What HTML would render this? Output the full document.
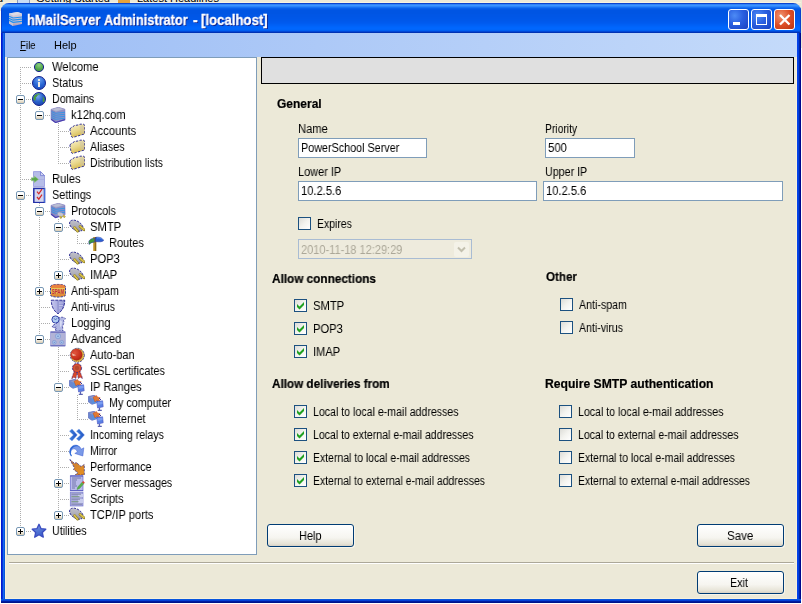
<!DOCTYPE html>
<html lang="en">
<head>
<meta charset="utf-8">
<title>hMailServer Administrator - [localhost]</title>
<style>
html,body{margin:0;padding:0}
body{width:802px;height:604px;overflow:hidden;background:#fff;position:relative;font:11px "Liberation Sans",sans-serif;color:#000}
i{font-style:normal;display:block;position:absolute}
.bgtop{position:absolute;left:0;top:0;width:802px;height:11px;background:linear-gradient(to bottom,#ece9d8 0,#ece9d8 2px,#f8f3de 2px,#f8f3de 3px,#ece9d8 3px);overflow:hidden}
.bgr{position:absolute;left:801px;top:0;width:1px;height:48px;background:#ece9d8}
.bgtop span{position:absolute;top:-8px;font:11px "Liberation Sans",sans-serif;white-space:pre;line-height:13px}
.bgtop .tb1{left:17px;top:0;width:11px;height:3px;background:#c9dcf5;border:1px solid #8899bb;border-top:0}
.bgtop .rss{left:118px;top:0;width:12px;height:3px;background:#e8a33a}
.win{position:absolute;left:1px;top:3px;width:800px;height:600px;background:#ece9d8;border-radius:8px 8px 0 0;overflow:hidden}
.win>*{position:absolute}
.win>*{margin-left:-1px;margin-top:-3px}
.title{left:1px;top:3px;width:800px;height:30px;background:linear-gradient(to bottom,#0a44cf 0px,#0a44cf 1px,#2f83f9 1px,#2f83f9 2px,#3b93ff 2px,#3b93ff 3px,#2a84fb 3px,#2a84fb 4px,#1670f2 4px,#1670f2 5px,#0860ea 5px,#0860ea 6px,#0358e6 6px,#0358e6 7px,#0055e3 7px,#0055e3 8px,#0055e3 8px,#0055e3 9px,#0055e3 9px,#0055e3 10px,#0055e3 10px,#0055e3 11px,#0056e5 11px,#0056e5 12px,#0056e6 12px,#0056e6 13px,#0056e6 13px,#0056e6 14px,#0057e7 14px,#0057e7 15px,#0057e8 15px,#0057e8 16px,#0058e9 16px,#0058e9 17px,#0058ea 17px,#0058ea 18px,#0059ec 18px,#0059ec 19px,#005aee 19px,#005aee 20px,#005cf0 20px,#005cf0 21px,#005ff4 21px,#005ff4 22px,#0061f7 22px,#0061f7 23px,#0064fa 23px,#0064fa 24px,#0066fd 24px,#0066fd 25px,#0067fe 25px,#0067fe 26px,#0066fb 26px,#0066fb 27px,#005ef0 27px,#005ef0 28px,#0047d6 28px,#0047d6 29px,#0032b4 29px,#0032b4 30px)}
.inner{left:1px;top:33px;width:800px;height:570px;background:#ece9d8}
.bl{left:1px;top:33px;width:4px;height:570px;background:linear-gradient(to right,#0019cf 0,#0019cf 1px,#0831d9 1px,#0831d9 2px,#166aee 2px,#166aee 3px,#0855dd 3px)}
.br{left:797px;top:33px;width:4px;height:570px;background:linear-gradient(to right,#0540ea 0,#0540ea 1px,#0040dc 1px,#0040dc 2px,#0024ac 2px,#0024ac 3px,#00088c 3px)}
.bb{left:1px;top:599px;width:800px;height:4px;background:linear-gradient(to top,#00138c 0,#00138c 1px,#001ea0 1px,#001ea0 2px,#0441d8 2px,#0441d8 3px,#0855dd 3px)}
.hl{left:5px;top:57px;width:1px;height:542px;background:#f6f1dc}
.hr{left:796px;top:57px;width:1px;height:542px;background:#f6f1dc}
.hb{left:5px;top:598px;width:792px;height:1px;background:#f6f1dc}
.menu{left:5px;top:33px;width:792px;height:24px;background:linear-gradient(to right,#9ebef5,#c4dafa)}
.wb{top:9px;width:21px;height:21px;box-sizing:border-box;border:1px solid #fff;border-radius:3px;background:radial-gradient(circle at 30% 30%,#4d8bf5 0%,#2a5fe0 45%,#1941c0 100%)}
.wb.wc{background:radial-gradient(circle at 30% 30%,#f0936f 0%,#dd4e27 50%,#b8330f 100%)}
.tree{left:7px;top:57px;width:250px;height:498px;box-sizing:border-box;border:1px solid #7f9db9;background:#fff}
.hd{height:1px;background:repeating-linear-gradient(to right,#adadad 0,#adadad 1px,transparent 1px,transparent 2px)}
.vd{width:1px;background:repeating-linear-gradient(to bottom,#adadad 0,#adadad 1px,transparent 1px,transparent 2px)}
.ex{width:9px;height:9px;box-sizing:border-box;border:1px solid #7898b5;border-radius:2px;background:linear-gradient(to bottom,#fff 0%,#fff 35%,#ece5d6 70%,#d6cab2 100%)}
.ex b{position:absolute;left:1px;top:3px;width:5px;height:1px;background:#000}
.ex b.pl:after{content:"";position:absolute;left:2px;top:-2px;width:1px;height:5px;background:#000}
.ic{overflow:hidden}
.hdr{left:261px;top:57px;width:533px;height:27px;box-sizing:border-box;border:1px solid #000;background:#e0e0e0}
.t,.tb,.tt,.tm{white-space:pre;font:12px "Liberation Sans",sans-serif;line-height:14px;height:14px;transform-origin:0 0;will-change:transform}
.tb{font-weight:bold;-webkit-text-stroke:.2px #000}
.tm{font-size:11px}
.tt{font:bold 14px "Liberation Sans",sans-serif;line-height:16px;height:16px;color:#fff;text-shadow:1px 1px 0 #0a1883;-webkit-text-stroke:.3px #fff}
.inp{box-sizing:border-box;border:1px solid #7f9db9;background:#fff}
.combo{box-sizing:border-box;border:1px solid #a9bcd3;background:#eeebdd}
.combo .dd{right:2px;top:2px;width:15px;height:15px;border-radius:2px;background:#f4f2e8}
.combo .dd svg{position:absolute;left:0;top:0}
.cb{width:13px;height:13px;box-sizing:border-box;border:1px solid #1c5180;background:linear-gradient(135deg,#dcdcd7 0%,#f3f3ef 50%,#fff 100%)}
.cb svg{position:absolute;left:0;top:0}
.btn{width:87px;height:23px;box-sizing:border-box;box-shadow:1px 1px 0 #f8f5ea;border:1px solid #003c74;border-radius:3px;background:linear-gradient(to bottom,#fff 0%,#f6f5f0 60%,#e6e3d6 90%,#d6d0c5 100%)}
.sep{left:9px;top:562px;width:785px;height:2px;box-sizing:border-box;border-top:1px solid #aca899;background:#fff}

.te{top:3px;width:1px;height:30px;background:#0a3fcc}

</style>
</head>
<body>
<div class="bgtop"><span style="left:-9px">ed</span><i class="tb1"></i><span style="left:36px">Getting Started</span><i class="rss"></i><span style="left:137px">Latest Headlines</span></div>
<div class="bgr"></div>
<div class="win">
<div class="title"></div>
<i class="te" style="left:1px"></i><i class="te" style="left:800px"></i>
<div class="inner"></div>
<i class="hl"></i><i class="hr"></i><i class="hb"></i>
<div class="menu"></div>
<svg class="ic" style="left:9px;top:12px" width="13" height="14" viewBox="0 0 13 14"><defs><linearGradient id="gtf" x1="0" y1="0" x2="0" y2="1"><stop offset="0" stop-color="#d6d2de"/><stop offset=".7" stop-color="#cbbccb"/><stop offset="1" stop-color="#a99ab4"/></linearGradient></defs><path d="M0 1.500L8.500 0 13 1.500V12L4 14 0 11.500z" fill="url(#gtf)"/><path d="M0 1.500L8.500 0 13 1.500 4 3.800z" fill="#dcdce6"/><path d="M0 1.500L4 3.800V14L0 11.500z" fill="#c4c4d8" opacity=".9"/><path d="M0 4.200L4 6 13 5M0 6.300L4 8.200 13 7.200M0 8.400L4 10.400 13 9.400" stroke="#1f8ff0" stroke-width="1.200" fill="none"/></svg>
<div class="wb" style="left:728px"><i style="left:4px;top:12px;width:7px;height:3px;background:#fff"></i></div>
<div class="wb" style="left:751px"><i style="left:4px;top:4px;width:11px;height:11px;border:1px solid #fff;border-top-width:3px;box-sizing:border-box"></i></div>
<div class="wb wc" style="left:774px"><svg width="19" height="19" viewBox="0 0 19 19" style="position:absolute;left:0;top:0"><path d="M5 5l9.500 9.500M14.500 5l-9.500 9.500" stroke="#fff" stroke-width="2.300"/></svg></div>
<div class="tree"></div>
<i class="vd" style="left:20px;top:67px;height:465px;background-position:0 0px"></i>
<i class="vd" style="left:39px;top:107px;height:9px;background-position:0 0px"></i>
<i class="vd" style="left:39px;top:203px;height:137px;background-position:0 0px"></i>
<i class="vd" style="left:58px;top:123px;height:41px;background-position:0 0px"></i>
<i class="vd" style="left:58px;top:219px;height:57px;background-position:0 0px"></i>
<i class="vd" style="left:58px;top:347px;height:169px;background-position:0 0px"></i>
<i class="vd" style="left:77px;top:235px;height:9px;background-position:0 0px"></i>
<i class="vd" style="left:77px;top:395px;height:25px;background-position:0 0px"></i>
<i class="hd" style="left:21px;top:67px;width:10px;background-position:1px 0"></i>
<svg class="ic" style="left:31px;top:59px" width="16" height="16" viewBox="0 0 16 16"><defs><radialGradient id="gw" cx=".5" cy=".3" r=".7"><stop offset="0" stop-color="#8ccf82"/><stop offset=".6" stop-color="#56a94f"/><stop offset="1" stop-color="#3d8f3a"/></radialGradient></defs><circle cx="8" cy="8" r="4.6" fill="url(#gw)" stroke="#1b2590" stroke-width="1"/></svg>
<i class="hd" style="left:21px;top:83px;width:10px;background-position:1px 0"></i>
<svg class="ic" style="left:31px;top:75px" width="16" height="16" viewBox="0 0 16 16"><defs><radialGradient id="gs" cx=".5" cy=".25" r=".8"><stop offset="0" stop-color="#6aa0f0"/><stop offset=".55" stop-color="#2a66d4"/><stop offset="1" stop-color="#1846b8"/></radialGradient></defs><circle cx="8" cy="8" r="6.5" fill="url(#gs)" stroke="#141f8c" stroke-width="1"/><rect x="7" y="7" width="2" height="5" fill="#f0ebe6"/><rect x="7" y="4" width="2" height="2" fill="#f0ebe6"/></svg>
<i class="hd" style="left:25px;top:99px;width:6px;background-position:1px 0"></i>
<i class="ex" style="left:16px;top:95px"><b class="mi"></b></i>
<svg class="ic" style="left:31px;top:91px" width="16" height="16" viewBox="0 0 16 16"><defs><radialGradient id="gg" cx=".4" cy=".3" r=".8"><stop offset="0" stop-color="#79a8ee"/><stop offset=".5" stop-color="#2a62cc"/><stop offset="1" stop-color="#163fa8"/></radialGradient></defs><circle cx="8" cy="8" r="6.5" fill="url(#gg)" stroke="#141f8c" stroke-width="1"/><path d="M2.2 8c.2-2.5 1.500-4.200 3.300-5l1.500.8-1 1.700-1.300.8.300 1.500L4 10z" fill="#4a9a3e"/><path d="M11.500 5.500l1.800 1.500.5 2.500-1.300 2-1-1.500.5-2z" fill="#4a9a3e"/><path d="M6 2.800l2-.5 1 1-1.500.8z" fill="#5aa84a"/></svg>
<i class="hd" style="left:44px;top:115px;width:6px;background-position:1px 0"></i>
<i class="ex" style="left:35px;top:111px"><b class="mi"></b></i>
<svg class="ic" style="left:50px;top:107px" width="16" height="16" viewBox="0 0 16 16"><path d="M1.100 2.400L8.300 .300 14.800 2.200 15.100 12.600 5.500 15.500 1.100 12.300z" fill="#8f8fc6" stroke="#6a60c0" stroke-width=".6"/><path d="M1.100 2.400L8.300 .300 14.800 2.200 5.500 4.800z" fill="#aeb0ca"/><path d="M3 2.300L8.300 .900 12.500 2.200 6 3.800z" fill="#bcbed4"/><path d="M1.100 2.400L5.500 4.800V15.500L1.100 12.300z" fill="#8486c0"/><path d="M1.500 4.600L5.500 6.300 15 5.300M1.500 6.600L5.500 8.300 15 7.300M1.500 8.600L5.500 10.300 15 9.300M1.500 10.600L5.500 12.300 15 11.300" stroke="#2f96e6" stroke-width=".9" fill="none"/><path d="M1.100 12.300L5.500 15.500 15.100 12.600" stroke="#4a3fb0" stroke-width="1.200" fill="none"/></svg>
<i class="hd" style="left:59px;top:131px;width:10px;background-position:1px 0"></i>
<svg class="ic" style="left:69px;top:123px" width="16" height="16" viewBox="0 0 16 16"><defs><linearGradient id="gf" x1="0" y1="0" x2=".45" y2="1"><stop offset="0" stop-color="#f7f2d2"/><stop offset=".55" stop-color="#ead98f"/><stop offset="1" stop-color="#d5b94f"/></linearGradient></defs><path d="M.9 6.100L2.100 4.500 4.100 3.900 4.900 2.600 10.100 1.800 10.900 1.200 14.900 1.200 15.800 3 15.700 10.900 3.700 14.500 2.100 13.300z" fill="url(#gf)" stroke="#23238f" stroke-width=".9" stroke-dasharray="2.400 1.400"/><path d="M10.500 2.400L15 1.900l.2 8.600-3.200 1z" fill="#c9c2aa" opacity=".5"/></svg>
<i class="hd" style="left:59px;top:147px;width:10px;background-position:1px 0"></i>
<svg class="ic" style="left:69px;top:139px" width="16" height="16" viewBox="0 0 16 16"><defs><linearGradient id="gf" x1="0" y1="0" x2=".45" y2="1"><stop offset="0" stop-color="#f7f2d2"/><stop offset=".55" stop-color="#ead98f"/><stop offset="1" stop-color="#d5b94f"/></linearGradient></defs><path d="M.9 6.100L2.100 4.500 4.100 3.900 4.900 2.600 10.100 1.800 10.900 1.200 14.900 1.200 15.800 3 15.700 10.900 3.700 14.500 2.100 13.300z" fill="url(#gf)" stroke="#23238f" stroke-width=".9" stroke-dasharray="2.400 1.400"/><path d="M10.500 2.400L15 1.900l.2 8.600-3.200 1z" fill="#c9c2aa" opacity=".5"/></svg>
<i class="hd" style="left:59px;top:163px;width:10px;background-position:1px 0"></i>
<svg class="ic" style="left:69px;top:155px" width="16" height="16" viewBox="0 0 16 16"><defs><linearGradient id="gf" x1="0" y1="0" x2=".45" y2="1"><stop offset="0" stop-color="#f7f2d2"/><stop offset=".55" stop-color="#ead98f"/><stop offset="1" stop-color="#d5b94f"/></linearGradient></defs><path d="M.9 6.100L2.100 4.500 4.100 3.900 4.900 2.600 10.100 1.800 10.900 1.200 14.900 1.200 15.800 3 15.700 10.900 3.700 14.500 2.100 13.300z" fill="url(#gf)" stroke="#23238f" stroke-width=".9" stroke-dasharray="2.400 1.400"/><path d="M10.500 2.400L15 1.900l.2 8.600-3.200 1z" fill="#c9c2aa" opacity=".5"/></svg>
<i class="hd" style="left:21px;top:179px;width:10px;background-position:1px 0"></i>
<svg class="ic" style="left:31px;top:171px" width="16" height="16" viewBox="0 0 16 16"><path d="M2.500 .600h7l4 4v11h-11z" fill="#b6bde8" stroke="#9096dc" stroke-width=".8"/><path d="M9.500 .600v4h4z" fill="#d4d8f2" stroke="#6a72d0" stroke-width=".7"/><path d="M2.500 8.500h11" stroke="#a2a8de" stroke-width=".6"/><path d="M.2 6.800h3V4.900L7.600 8.300 3.200 11.700V9.800h-3z" fill="#5aa84a" stroke="#a6cc98" stroke-width=".5"/></svg>
<i class="hd" style="left:25px;top:195px;width:6px;background-position:1px 0"></i>
<i class="ex" style="left:16px;top:191px"><b class="mi"></b></i>
<svg class="ic" style="left:31px;top:187px" width="16" height="16" viewBox="0 0 16 16"><rect x="2.800" y="1.400" width="10.700" height="14.200" fill="#d3d6ee" stroke="#2330a8" stroke-width="1.500"/><path d="M13.600 1.400v14.200" stroke="#4a78e0" stroke-width="1"/><path d="M6 4.600l1.800 2.200L11 2.200M6 10l1.800 2.200L11 7.600" stroke="#d22a2a" stroke-width="1.200" fill="none"/></svg>
<i class="hd" style="left:44px;top:211px;width:6px;background-position:1px 0"></i>
<i class="ex" style="left:35px;top:207px"><b class="mi"></b></i>
<svg class="ic" style="left:50px;top:203px" width="16" height="16" viewBox="0 0 16 16"><path d="M1.100 2.400L8.300 .300 14.800 2.200 15.100 11.600 5.500 14.500 1.100 11.300z" fill="#8f8fc6" stroke="#6a60c0" stroke-width=".6"/><path d="M1.100 2.400L8.300 .300 14.800 2.200 5.500 4.800z" fill="#aeb0ca"/><path d="M3 2.300L8.300 .900 12.500 2.200 6 3.800z" fill="#bcbed4"/><path d="M1.100 2.400L5.500 4.800V14.500L1.100 11.300z" fill="#8486c0"/><path d="M1.500 4.600L5.500 6.300 15 5.300M1.500 6.600L5.500 8.300 15 7.300M1.500 8.600L5.500 10.300 15 9.300" stroke="#2f96e6" stroke-width=".9" fill="none"/><path d="M1.100 11.300L5.500 14.500 9 13.500" stroke="#4a3fb0" stroke-width="1.200" fill="none"/><ellipse cx="10.500" cy="11.500" rx="3.300" ry="2.200" transform="rotate(25 10.500 11.500)" fill="#c4c4d2" stroke="#8a8ab8" stroke-width=".4"/><path d="M10 13.200l1.400 2M13 12.500l2 1.800" stroke="#8a7a20" stroke-width="2"/><path d="M10 13.200l1.400 2M13 12.500l2 1.800" stroke="#dcc44e" stroke-width="1.100"/></svg>
<i class="hd" style="left:63px;top:227px;width:6px;background-position:1px 0"></i>
<i class="ex" style="left:54px;top:223px"><b class="mi"></b></i>
<svg class="ic" style="left:69px;top:219px" width="16" height="16" viewBox="0 0 16 16"><defs><linearGradient id="gp" x1="0" y1="0" x2="1" y2="1"><stop offset="0" stop-color="#c9c9d0"/><stop offset=".6" stop-color="#a9a9b6"/><stop offset="1" stop-color="#8a8a9c"/></linearGradient></defs><ellipse cx="7.300" cy="6.700" rx="7.500" ry="4.500" transform="rotate(33 7.300 6.700)" fill="url(#gp)" stroke="#23238f" stroke-width=".9" stroke-dasharray="2.200 1.100"/><path d="M5.600 8.600l3 3.600M11 7.400l4 3.400" stroke="#8a7a20" stroke-width="2.600" stroke-linecap="round"/><path d="M5.500 8.400l3 3.600M10.900 7.200l4 3.400" stroke="#dcc44e" stroke-width="1.500" stroke-linecap="round"/></svg>
<i class="hd" style="left:78px;top:243px;width:10px;background-position:1px 0"></i>
<svg class="ic" style="left:88px;top:235px" width="16" height="16" viewBox="0 0 16 16"><rect x="5.200" y="2" width="3" height="14" fill="#c99a28"/><rect x="6.800" y="2" width="1.400" height="14" fill="#8a6a1a"/><path d="M.8 6.500C1.500 4.500 4 3 6.500 3.200v4C4.500 7 2.500 8 1 9.500z" fill="#3f9a3a" stroke="#1f2a9c" stroke-width=".5"/><path d="M7.500 2.500c3-1 7 .2 8.200 3-1 1.500-5 1.600-8.200 1z" fill="#2a5fcf" stroke="#1f2a9c" stroke-width=".5"/><path d="M9 3c2-.5 4 0 5.500 1.500" stroke="#6a9af0" stroke-width=".8" fill="none"/></svg>
<i class="hd" style="left:59px;top:259px;width:10px;background-position:1px 0"></i>
<svg class="ic" style="left:69px;top:251px" width="16" height="16" viewBox="0 0 16 16"><defs><linearGradient id="gp" x1="0" y1="0" x2="1" y2="1"><stop offset="0" stop-color="#c9c9d0"/><stop offset=".6" stop-color="#a9a9b6"/><stop offset="1" stop-color="#8a8a9c"/></linearGradient></defs><ellipse cx="7.300" cy="6.700" rx="7.500" ry="4.500" transform="rotate(33 7.300 6.700)" fill="url(#gp)" stroke="#23238f" stroke-width=".9" stroke-dasharray="2.200 1.100"/><path d="M5.600 8.600l3 3.600M11 7.400l4 3.400" stroke="#8a7a20" stroke-width="2.600" stroke-linecap="round"/><path d="M5.500 8.400l3 3.600M10.900 7.200l4 3.400" stroke="#dcc44e" stroke-width="1.500" stroke-linecap="round"/></svg>
<i class="hd" style="left:63px;top:275px;width:6px;background-position:1px 0"></i>
<i class="ex" style="left:54px;top:271px"><b class="pl"></b></i>
<svg class="ic" style="left:69px;top:267px" width="16" height="16" viewBox="0 0 16 16"><defs><linearGradient id="gp" x1="0" y1="0" x2="1" y2="1"><stop offset="0" stop-color="#c9c9d0"/><stop offset=".6" stop-color="#a9a9b6"/><stop offset="1" stop-color="#8a8a9c"/></linearGradient></defs><ellipse cx="7.300" cy="6.700" rx="7.500" ry="4.500" transform="rotate(33 7.300 6.700)" fill="url(#gp)" stroke="#23238f" stroke-width=".9" stroke-dasharray="2.200 1.100"/><path d="M5.600 8.600l3 3.600M11 7.400l4 3.400" stroke="#8a7a20" stroke-width="2.600" stroke-linecap="round"/><path d="M5.500 8.400l3 3.600M10.900 7.200l4 3.400" stroke="#dcc44e" stroke-width="1.500" stroke-linecap="round"/></svg>
<i class="hd" style="left:44px;top:291px;width:6px;background-position:1px 0"></i>
<i class="ex" style="left:35px;top:287px"><b class="pl"></b></i>
<svg class="ic" style="left:50px;top:283px" width="16" height="16" viewBox="0 0 16 16"><defs><linearGradient id="gsp" x1="0" y1="0" x2="0" y2="1"><stop offset="0" stop-color="#e2702c"/><stop offset=".26" stop-color="#e88a38"/><stop offset=".32" stop-color="#e9c55a"/><stop offset=".75" stop-color="#e2b548"/><stop offset=".82" stop-color="#e07a30"/><stop offset="1" stop-color="#e6b040"/></linearGradient></defs><path d="M.5 3.500C.5 .700 15.500 .700 15.500 3.500v8.500c0 2.800-15 2.800-15 0z" fill="url(#gsp)" stroke="#1f2a9c" stroke-width=".9" stroke-dasharray="2.500 1"/><ellipse cx="8" cy="3" rx="6.500" ry="1.600" fill="#e98040"/><text x="8" y="10.800" font-size="6.500" font-weight="bold" text-anchor="middle" fill="#c02840" font-family="Liberation Sans, sans-serif" textLength="12.500" lengthAdjust="spacingAndGlyphs">SPAM</text></svg>
<i class="hd" style="left:40px;top:307px;width:10px;background-position:1px 0"></i>
<svg class="ic" style="left:50px;top:299px" width="16" height="16" viewBox="0 0 16 16"><defs><linearGradient id="gsh" x1="0" y1="0" x2="1" y2="0"><stop offset="0" stop-color="#c8caf0"/><stop offset=".5" stop-color="#a8aade"/><stop offset="1" stop-color="#8488cc"/></linearGradient></defs><path d="M1.300 1.200h13.400c0 5.500-1.600 10-6.700 13.600C3 11.200 1.300 6.700 1.300 1.200z" fill="url(#gsh)" stroke="#23238f" stroke-width=".9" stroke-dasharray="3 1"/><path d="M8 2v12" stroke="#7074bc" stroke-width=".8" opacity=".6"/><path d="M9 4h4.500M9 6.500h4M9 9h3" stroke="#d4d6f4" stroke-width=".8" opacity=".8"/></svg>
<i class="hd" style="left:40px;top:323px;width:10px;background-position:1px 0"></i>
<svg class="ic" style="left:50px;top:315px" width="16" height="16" viewBox="0 0 16 16"><path d="M8 3.500c2-1.500 5-2 7.500 .2l-2 1.800c1 2 0 4-1 5.500l.5 5H5l1.500-4-3 1-1.500-2 5-3z" fill="#b2b8e4" stroke="#23238f" stroke-width=".7" stroke-dasharray="2.200 1.200"/><path d="M10 5l2 1.500-.5 4-1.500 2z" fill="#d8dcf4"/><circle cx="5.500" cy="4.500" r="3.600" fill="#b0cdf2" stroke="#23309c" stroke-width=".9"/><path d="M4 3.200l1.500 1.800L7 3.200" stroke="#5a6ab8" stroke-width=".9" fill="none"/></svg>
<i class="hd" style="left:44px;top:339px;width:6px;background-position:1px 0"></i>
<i class="ex" style="left:35px;top:335px"><b class="mi"></b></i>
<svg class="ic" style="left:50px;top:331px" width="16" height="16" viewBox="0 0 16 16"><rect x=".6" y="1" width="14.600" height="13.800" fill="#b2b3d6"/><path d="M.6 1h14.600M.6 14.800h14.600" stroke="#2a2f9c" stroke-width="1"/><rect x=".6" y="1" width="14.600" height="13.800" fill="none" stroke="#8a8cd0" stroke-width=".6"/><circle cx="8" cy="5.200" r="2.600" fill="#a8c4ea" stroke="#7f96d0" stroke-width=".7"/><circle cx="4.300" cy="11.300" r="1.900" fill="#a8c4ea" stroke="#7f96d0" stroke-width=".7"/><circle cx="11.700" cy="11.300" r="1.900" fill="#a8c4ea" stroke="#7f96d0" stroke-width=".7"/><circle cx="8" cy="5.200" r=".8" fill="#6a86c8"/><circle cx="4.300" cy="11.300" r=".6" fill="#6a86c8"/><circle cx="11.700" cy="11.300" r=".6" fill="#6a86c8"/></svg>
<i class="hd" style="left:59px;top:355px;width:10px;background-position:1px 0"></i>
<svg class="ic" style="left:69px;top:347px" width="16" height="16" viewBox="0 0 16 16"><defs><radialGradient id="gab" cx=".35" cy=".35" r=".8"><stop offset="0" stop-color="#e0553e"/><stop offset=".6" stop-color="#c8301c"/><stop offset="1" stop-color="#9c200e"/></radialGradient></defs><circle cx="8.300" cy="8.300" r="7" fill="#d0a838" stroke="#23238f" stroke-width=".8" stroke-dasharray="2 1"/><circle cx="8.300" cy="8.300" r="6.200" fill="none" stroke="#f0e0a0" stroke-width=".7" stroke-dasharray="1 1.200"/><circle cx="7.500" cy="7.700" r="5.900" fill="url(#gab)"/><path d="M2.800 6.200l4.500 2-3.500 .8z" fill="#f0b8a0"/></svg>
<i class="hd" style="left:59px;top:371px;width:10px;background-position:1px 0"></i>
<svg class="ic" style="left:69px;top:363px" width="16" height="16" viewBox="0 0 16 16"><path d="M5.500 7l-3 8.800 2.800-1.500 1.500 1.500L8.500 9zM10.500 7l3.200 8.500-2.800-1.300-1.600 1.600L8 9z" fill="#d8482a" stroke="#23238f" stroke-width=".5" stroke-dasharray="2 1"/><circle cx="8" cy="5" r="4.600" fill="#d2452a" stroke="#23238f" stroke-width=".7" stroke-dasharray="2 1"/><circle cx="8" cy="5" r="2.800" fill="#b8482e"/><circle cx="8" cy="5" r="2.800" fill="none" stroke="#e07050" stroke-width=".5"/></svg>
<i class="hd" style="left:63px;top:387px;width:6px;background-position:1px 0"></i>
<i class="ex" style="left:54px;top:383px"><b class="mi"></b></i>
<svg class="ic" style="left:69px;top:379px" width="16" height="16" viewBox="0 0 16 16"><path d="M.5 1.500L6 .3l3.500 2.200v5L4 9.300.5 7z" fill="#8e9ccc" stroke="#4a50b0" stroke-width=".6"/><path d="M.5 1.500L4 3.500v5.800L.5 7z" fill="#6a88d0"/><path d="M4 3.500l5.500-1v5L4 9.300z" fill="#5a90dc"/><path d="M5 2.200l3.500-1.700 1 1.500 2.700.8-1.200 1.600 1 1.800-3.500-.6-1.500 1.400z" fill="#e07a32" stroke="#c8401a" stroke-width=".4"/><path d="M11 3l2 2" stroke="#23238f" stroke-width=".9"/><path d="M8.800 6.600l5.800-.8.600 6-5.600 1.200z" fill="#5a80e4" stroke="#4a50c0" stroke-width=".6"/><path d="M9.300 7.200l5-.7.300 2.500-5 .9z" fill="#7a9cf0"/><path d="M11.500 12.800v2M9.800 15.300h4" stroke="#5a62b0" stroke-width="1.200"/></svg>
<i class="hd" style="left:78px;top:403px;width:10px;background-position:1px 0"></i>
<svg class="ic" style="left:88px;top:395px" width="16" height="16" viewBox="0 0 16 16"><path d="M.5 1.500L6 .3l3.500 2.200v5L4 9.300.5 7z" fill="#8e9ccc" stroke="#4a50b0" stroke-width=".6"/><path d="M.5 1.500L4 3.500v5.800L.5 7z" fill="#6a88d0"/><path d="M4 3.500l5.500-1v5L4 9.300z" fill="#5a90dc"/><path d="M5 2.200l3.500-1.700 1 1.500 2.700.8-1.200 1.600 1 1.800-3.500-.6-1.500 1.400z" fill="#e07a32" stroke="#c8401a" stroke-width=".4"/><path d="M11 3l2 2" stroke="#23238f" stroke-width=".9"/><path d="M8.800 6.600l5.800-.8.600 6-5.600 1.200z" fill="#5a80e4" stroke="#4a50c0" stroke-width=".6"/><path d="M9.300 7.200l5-.7.300 2.500-5 .9z" fill="#7a9cf0"/><path d="M11.500 12.800v2M9.800 15.300h4" stroke="#5a62b0" stroke-width="1.200"/></svg>
<i class="hd" style="left:78px;top:419px;width:10px;background-position:1px 0"></i>
<svg class="ic" style="left:88px;top:411px" width="16" height="16" viewBox="0 0 16 16"><path d="M.5 1.500L6 .3l3.500 2.200v5L4 9.300.5 7z" fill="#8e9ccc" stroke="#4a50b0" stroke-width=".6"/><path d="M.5 1.500L4 3.500v5.800L.5 7z" fill="#6a88d0"/><path d="M4 3.500l5.500-1v5L4 9.300z" fill="#5a90dc"/><path d="M5 2.200l3.500-1.700 1 1.500 2.700.8-1.200 1.600 1 1.800-3.500-.6-1.500 1.400z" fill="#e07a32" stroke="#c8401a" stroke-width=".4"/><path d="M11 3l2 2" stroke="#23238f" stroke-width=".9"/><path d="M8.800 6.600l5.800-.8.600 6-5.600 1.200z" fill="#5a80e4" stroke="#4a50c0" stroke-width=".6"/><path d="M9.300 7.200l5-.7.300 2.500-5 .9z" fill="#7a9cf0"/><path d="M11.500 12.800v2M9.800 15.300h4" stroke="#5a62b0" stroke-width="1.200"/></svg>
<i class="hd" style="left:59px;top:435px;width:10px;background-position:1px 0"></i>
<svg class="ic" style="left:69px;top:427px" width="16" height="16" viewBox="0 0 16 16"><defs><linearGradient id="gr" x1="0" y1="0" x2="1" y2="0"><stop offset="0" stop-color="#3f7fda"/><stop offset="1" stop-color="#1f52c4"/></linearGradient></defs><path d="M.4 4.200L3 2 8.300 7.900 3 13.900.4 11.700 4.400 7.900z" fill="url(#gr)" stroke="#8aa8e8" stroke-width=".4"/><path d="M7.400 4.200L10 2 15.500 7.900 10 13.900 7.400 11.700 11.500 7.900z" fill="url(#gr)" stroke="#8aa8e8" stroke-width=".4"/></svg>
<i class="hd" style="left:59px;top:451px;width:10px;background-position:1px 0"></i>
<svg class="ic" style="left:69px;top:443px" width="16" height="16" viewBox="0 0 16 16"><path d="M.8 9.500C.2 4.500 4.500 1 8.500 2.500c2 .8 3.200 2.200 3.800 3.800L14.800 4.800l-1 8.200-8-2.600 2.600-1.500C7.500 6.500 5.500 5.300 3.800 6c-1.700.7-2 2.300-2 3.500z" fill="#7a9ae8" stroke="#3a5ad0" stroke-width=".5"/><path d="M.8 9.500C.2 4.500 4.500 1 8.500 2.500c1.200.5 2.200 1.200 2.900 2.100-2-1.800-5-2-7.200-.2C2.500 5.800 1.800 7.500 1.800 9.500z" fill="#2a66d4"/><path d="M1 8.500c0 2.200.6 3.500 1.500 4.500" stroke="#2a66d4" stroke-width="1.300" fill="none"/></svg>
<i class="hd" style="left:59px;top:467px;width:10px;background-position:1px 0"></i>
<svg class="ic" style="left:69px;top:459px" width="16" height="16" viewBox="0 0 16 16"><defs><linearGradient id="gpf" x1="0" y1="0" x2="1" y2="1"><stop offset="0" stop-color="#c87a3a"/><stop offset="1" stop-color="#e8921e"/></linearGradient></defs><path d="M.8 .5L6 4.800 7 3.200 12 7.500 15.300 5.500v10.500H6l3-2.300L4.500 10.500 5.500 9z" fill="url(#gpf)" stroke="#23238f" stroke-width=".7" stroke-dasharray="2.200 1.200"/></svg>
<i class="hd" style="left:63px;top:483px;width:6px;background-position:1px 0"></i>
<i class="ex" style="left:54px;top:479px"><b class="pl"></b></i>
<svg class="ic" style="left:69px;top:475px" width="16" height="16" viewBox="0 0 16 16"><rect x="1.300" y=".8" width="12.700" height="15" fill="#b9bbea" stroke="#6a6cd0" stroke-width=".7"/><path d="M1.300 1h12.700M1.300 15.800h12.700" stroke="#3a3fb0" stroke-width=".8"/><path d="M3 3h9M3 5h5M3 7h4M3 9h4M3 11h5M3 13h3" stroke="#6c70a4" stroke-width=".9"/><path d="M8 14.500L8.800 12 13.300 7 15 8.500 10.500 13.500z" fill="#5ab04a" stroke="#3a8a34" stroke-width=".4"/><path d="M13 7.200l1.200-1.200 1.600 1.500-1 1.200z" fill="#e04030"/></svg>
<i class="hd" style="left:59px;top:499px;width:10px;background-position:1px 0"></i>
<svg class="ic" style="left:69px;top:491px" width="16" height="16" viewBox="0 0 16 16"><rect x="1.300" y="1" width="12.700" height="14" fill="#a8aada" stroke="#7a7cd0" stroke-width=".7"/><path d="M9 3h5v3H9zM9 8h5v4H9z" fill="#c8ccec"/><path d="M2.500 3.200h9.500M2.500 8.200h8.500M2.500 13.200h10.500" stroke="#8084ac" stroke-width="1"/><path d="M2.500 5.700h8M2.500 10.700h7" stroke="#7a9a7c" stroke-width="1"/></svg>
<i class="hd" style="left:63px;top:515px;width:6px;background-position:1px 0"></i>
<i class="ex" style="left:54px;top:511px"><b class="pl"></b></i>
<svg class="ic" style="left:69px;top:507px" width="16" height="16" viewBox="0 0 16 16"><defs><linearGradient id="gp" x1="0" y1="0" x2="1" y2="1"><stop offset="0" stop-color="#c9c9d0"/><stop offset=".6" stop-color="#a9a9b6"/><stop offset="1" stop-color="#8a8a9c"/></linearGradient></defs><ellipse cx="7.300" cy="6.700" rx="7.500" ry="4.500" transform="rotate(33 7.300 6.700)" fill="url(#gp)" stroke="#23238f" stroke-width=".9" stroke-dasharray="2.200 1.100"/><path d="M5.600 8.600l3 3.600M11 7.400l4 3.400" stroke="#8a7a20" stroke-width="2.600" stroke-linecap="round"/><path d="M5.500 8.400l3 3.600M10.900 7.200l4 3.400" stroke="#dcc44e" stroke-width="1.500" stroke-linecap="round"/></svg>
<i class="hd" style="left:25px;top:531px;width:6px;background-position:1px 0"></i>
<i class="ex" style="left:16px;top:527px"><b class="pl"></b></i>
<svg class="ic" style="left:31px;top:523px" width="16" height="16" viewBox="0 0 16 16"><defs><linearGradient id="gst" x1="0" y1="0" x2=".4" y2="1"><stop offset="0" stop-color="#8ea2e4"/><stop offset=".5" stop-color="#5a7cd8"/><stop offset="1" stop-color="#3a5cc8"/></linearGradient></defs><path d="M8 1.300l2 4.300 4.800.6-3.500 3.300 1 4.700L8 11.800 3.700 14.200l1-4.700L1.200 6.200 6 5.600z" fill="url(#gst)" stroke="#3a4cc0" stroke-width="1.300" stroke-linejoin="round"/></svg>
<div class="hdr"></div>
<i class="inp" style="left:298px;top:138px;width:129px;height:20px"></i>
<i class="inp" style="left:545px;top:138px;width:90px;height:20px"></i>
<i class="inp" style="left:298px;top:181px;width:239px;height:20px"></i>
<i class="inp" style="left:543px;top:181px;width:240px;height:20px"></i>
<i class="combo" style="left:298px;top:239px;width:174px;height:20px"><i class="dd"><svg width="15" height="15" viewBox="0 0 15 15"><path d="M4 5.500l3.500 3.500 3.500-3.500" stroke="#c2bfae" stroke-width="2" fill="none"/></svg></i></i>
<i class="cb" style="left:298px;top:217px"></i>
<i class="cb" style="left:294px;top:299px"><svg width="11" height="11" viewBox="0 0 11 11"><path d="M2 4L4.500 6.500 9 2v3L4.500 9.500 2 7z" fill="#21a121"/></svg></i>
<i class="cb" style="left:294px;top:322px"><svg width="11" height="11" viewBox="0 0 11 11"><path d="M2 4L4.500 6.500 9 2v3L4.500 9.500 2 7z" fill="#21a121"/></svg></i>
<i class="cb" style="left:294px;top:345px"><svg width="11" height="11" viewBox="0 0 11 11"><path d="M2 4L4.500 6.500 9 2v3L4.500 9.500 2 7z" fill="#21a121"/></svg></i>
<i class="cb" style="left:294px;top:405px"><svg width="11" height="11" viewBox="0 0 11 11"><path d="M2 4L4.500 6.500 9 2v3L4.500 9.500 2 7z" fill="#21a121"/></svg></i>
<i class="cb" style="left:294px;top:428px"><svg width="11" height="11" viewBox="0 0 11 11"><path d="M2 4L4.500 6.500 9 2v3L4.500 9.500 2 7z" fill="#21a121"/></svg></i>
<i class="cb" style="left:294px;top:451px"><svg width="11" height="11" viewBox="0 0 11 11"><path d="M2 4L4.500 6.500 9 2v3L4.500 9.500 2 7z" fill="#21a121"/></svg></i>
<i class="cb" style="left:294px;top:474px"><svg width="11" height="11" viewBox="0 0 11 11"><path d="M2 4L4.500 6.500 9 2v3L4.500 9.500 2 7z" fill="#21a121"/></svg></i>
<i class="cb" style="left:560px;top:298px"></i>
<i class="cb" style="left:560px;top:321px"></i>
<i class="cb" style="left:559px;top:405px"></i>
<i class="cb" style="left:559px;top:428px"></i>
<i class="cb" style="left:559px;top:451px"></i>
<i class="cb" style="left:559px;top:474px"></i>
<i class="btn" style="left:267px;top:524px"></i>
<i class="btn" style="left:697px;top:524px"></i>
<i class="btn" style="left:697px;top:571px"></i>
<i class="sep"></i>
<span class="t" style="left:52.00px;top:60px;transform:scaleX(0.9388);">Welcome</span>
<span class="t" style="left:52.09px;top:76px;transform:scaleX(0.9091);">Status</span>
<span class="t" style="left:52.11px;top:92px;transform:scaleX(0.8913);">Domains</span>
<span class="t" style="left:71.07px;top:108px;transform:scaleX(0.9298);">k12hq.com</span>
<span class="t" style="left:90.00px;top:124px;transform:scaleX(0.9388);">Accounts</span>
<span class="t" style="left:90.00px;top:140px;transform:scaleX(0.8947);">Aliases</span>
<span class="t" style="left:90.13px;top:156px;transform:scaleX(0.8675);">Distribution lists</span>
<span class="t" style="left:52.07px;top:172px;transform:scaleX(0.9310);">Rules</span>
<span class="t" style="left:52.10px;top:188px;transform:scaleX(0.9048);">Settings</span>
<span class="t" style="left:71.10px;top:204px;transform:scaleX(0.8980);">Protocols</span>
<span class="t" style="left:90.06px;top:220px;transform:scaleX(0.9375);">SMTP</span>
<span class="t" style="left:109.08px;top:236px;transform:scaleX(0.9189);">Routes</span>
<span class="t" style="left:90.07px;top:252px;transform:scaleX(0.9333);">POP3</span>
<span class="t" style="left:90.07px;top:268px;transform:scaleX(0.9286);">IMAP</span>
<span class="t" style="left:71.00px;top:284px;transform:scaleX(0.8868);">Anti-spam</span>
<span class="t" style="left:71.00px;top:300px;transform:scaleX(0.8800);">Anti-virus</span>
<span class="t" style="left:71.07px;top:316px;transform:scaleX(0.9268);">Logging</span>
<span class="t" style="left:71.00px;top:332px;transform:scaleX(0.9434);">Advanced</span>
<span class="t" style="left:90.00px;top:348px;transform:scaleX(0.9167);">Auto-ban</span>
<span class="t" style="left:90.10px;top:364px;transform:scaleX(0.9024);">SSL certificates</span>
<span class="t" style="left:90.07px;top:380px;transform:scaleX(0.9259);">IP Ranges</span>
<span class="t" style="left:109.10px;top:396px;transform:scaleX(0.8971);">My computer</span>
<span class="t" style="left:109.10px;top:412px;transform:scaleX(0.9000);">Internet</span>
<span class="t" style="left:90.12px;top:428px;transform:scaleX(0.8795);">Incoming relays</span>
<span class="t" style="left:90.13px;top:444px;transform:scaleX(0.8667);">Mirror</span>
<span class="t" style="left:90.10px;top:460px;transform:scaleX(0.8955);">Performance</span>
<span class="t" style="left:90.12px;top:476px;transform:scaleX(0.8804);">Server messages</span>
<span class="t" style="left:90.09px;top:492px;transform:scaleX(0.9143);">Scripts</span>
<span class="t" style="left:90.00px;top:508px;transform:scaleX(0.9265);">TCP/IP ports</span>
<span class="t" style="left:52.11px;top:524px;transform:scaleX(0.8919);">Utilities</span>
<span class="tt" style="left:27.08px;top:12px;transform:scaleX(0.9231);">hMailServer</span>
<span class="tt" style="left:104.09px;top:12px;transform:scaleX(0.9121);">Administrator</span>
<span class="tt" style="left:193.00px;top:12px;">-</span>
<span class="tt" style="left:201.06px;top:12px;transform:scaleX(0.9420);">[localhost]</span>
<span class="tm" style="left:20.00px;top:38px;transform:scaleX(0.8824);"><u>F</u>ile</span>
<span class="tm" style="left:54.00px;top:38px;">Help</span>
<span class="tb" style="left:277.00px;top:97px;">General</span>
<span class="t" style="left:298.07px;top:122px;transform:scaleX(0.9333);">Name</span>
<span class="t" style="left:301.10px;top:141px;transform:scaleX(0.8981);">PowerSchool Server</span>
<span class="t" style="left:545.14px;top:122px;transform:scaleX(0.8611);">Priority</span>
<span class="t" style="left:548.05px;top:141px;transform:scaleX(0.9474);">500</span>
<span class="t" style="left:298.09px;top:165px;transform:scaleX(0.9130);">Lower IP</span>
<span class="t" style="left:301.07px;top:184px;transform:scaleX(0.9286);">10.2.5.6</span>
<span class="t" style="left:545.11px;top:165px;transform:scaleX(0.8913);">Upper IP</span>
<span class="t" style="left:546.07px;top:184px;transform:scaleX(0.9286);">10.2.5.6</span>
<span class="t" style="left:317.13px;top:217px;transform:scaleX(0.8718);">Expires</span>
<span class="t" style="left:301.08px;top:243px;transform:scaleX(0.9174);color:#aca899">2010-11-18 12:29:29</span>
<span class="tb" style="left:272.00px;top:272px;transform:scaleX(0.9810);">Allow connections</span>
<span class="tb" style="left:546.00px;top:270px;transform:scaleX(0.9688);">Other</span>
<span class="t" style="left:313.06px;top:299px;transform:scaleX(0.9375);">SMTP</span>
<span class="t" style="left:313.07px;top:322px;transform:scaleX(0.9333);">POP3</span>
<span class="t" style="left:313.07px;top:345px;transform:scaleX(0.9286);">IMAP</span>
<span class="t" style="left:579.00px;top:298px;transform:scaleX(0.8868);">Anti-spam</span>
<span class="t" style="left:579.00px;top:321px;transform:scaleX(0.8800);">Anti-virus</span>
<span class="tb" style="left:272.00px;top:377px;transform:scaleX(0.9750);">Allow deliveries from</span>
<span class="tb" style="left:544.99px;top:377px;transform:scaleX(1.0121);">Require SMTP authentication</span>
<span class="t" style="left:313.12px;top:405px;transform:scaleX(0.8834);">Local to local e-mail addresses</span>
<span class="t" style="left:578.12px;top:405px;transform:scaleX(0.8834);">Local to local e-mail addresses</span>
<span class="t" style="left:313.12px;top:428px;transform:scaleX(0.8785);">Local to external e-mail addresses</span>
<span class="t" style="left:578.12px;top:428px;transform:scaleX(0.8785);">Local to external e-mail addresses</span>
<span class="t" style="left:313.13px;top:451px;transform:scaleX(0.8715);">External to local e-mail addresses</span>
<span class="t" style="left:578.13px;top:451px;transform:scaleX(0.8715);">External to local e-mail addresses</span>
<span class="t" style="left:313.13px;top:474px;transform:scaleX(0.8680);">External to external e-mail addresses</span>
<span class="t" style="left:578.13px;top:474px;transform:scaleX(0.8680);">External to external e-mail addresses</span>
<span class="t" style="left:299.09px;top:529px;transform:scaleX(0.9130);">Help</span>
<span class="t" style="left:727.04px;top:529px;transform:scaleX(0.9615);">Save</span>
<span class="t" style="left:730.11px;top:576px;transform:scaleX(0.8947);">Exit</span>
<i class="bl"></i><i class="br"></i><i class="bb"></i>
</div>
</body>
</html>
